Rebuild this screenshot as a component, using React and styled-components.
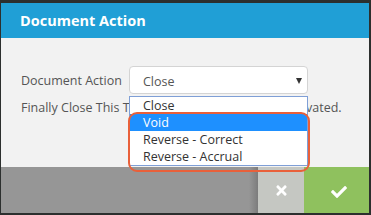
import React from 'react'
import styled, { createGlobalStyle } from 'styled-components'
import { FaTimes, FaCheck } from 'react-icons/fa'

const GlobalStyle = createGlobalStyle`
  html, body {
    margin: 0;
    padding: 0;
    background: #2c2f2e;
    font-family: "Open Sans", "Noto Sans", sans-serif;
  }
`

const Backdrop = styled.div`
  width: 371px;
  height: 215px;
  padding: 3px 2px 2px 1px;
  box-sizing: border-box;
  overflow: hidden;
`

const Modal = styled.div`
  position: relative;
  width: 368px;
  height: 210px;
  display: flex;
  flex-direction: column;
  background: #f2f2f2;
`

const Header = styled.div`
  height: 35px;
  flex: none;
  display: flex;
  align-items: center;
  padding: 0 19px;
  background: #209fd6;
  color: #fff;
  font-size: 14.5px;
  font-weight: 700;
`

const Body = styled.div`
  flex: 1;
  padding: 28px 20px 0;
  color: #555;
  font-size: 12.5px;
`

const Row = styled.div`
  display: flex;
  align-items: center;
`

const Label = styled.div`
  width: 108px;
  flex: none;
`

const SelectWrap = styled.div`
  position: relative;
  width: 179px;
`

const SelectBox = styled.div`
  height: 28px;
  box-sizing: border-box;
  display: flex;
  align-items: center;
  justify-content: space-between;
  padding: 2px 5px 0 13px;
  background: #fff;
  border: 1px solid #d4d4d4;
  border-radius: 4px;
  color: #555;
`

const Caret = styled.span`
  width: 0;
  height: 0;
  border-left: 3.5px solid transparent;
  border-right: 3.5px solid transparent;
  border-top: 6px solid #333;
`

const Hint = styled.p`
  margin: 5px 0 0;
  white-space: nowrap;
`

const OptionList = styled.ul`
  position: absolute;
  top: 30px;
  left: 0;
  right: 0;
  margin: 0;
  padding: 0;
  list-style: none;
  background: #fff;
  border: 1px solid #7f9fd6;
  z-index: 2;
`

const Option = styled.li`
  height: 17px;
  line-height: 17px;
  padding: 0 13px;
  color: ${p => (p.$active ? '#fff' : '#333')};
  background: ${p => (p.$active ? '#1e90ff' : 'transparent')};
`

const Callout = styled.div`
  position: absolute;
  top: 46px;
  left: -1px;
  width: 182px;
  height: 60px;
  box-sizing: border-box;
  border: 2px solid #e9603a;
  border-radius: 9px;
  z-index: 3;
`

const Footer = styled.div`
  height: 46px;
  flex: none;
  display: flex;
`

const Filler = styled.div`
  flex: 1;
  background: linear-gradient(to right, #969696 0, #969696 calc(100% - 9px), #7c7c7c 100%);
`

const ActionButton = styled.button`
  width: ${p => p.$width}px;
  border: 0;
  margin: 0;
  padding: 0;
  display: flex;
  align-items: center;
  justify-content: center;
  background: ${p => p.$bg};
  color: #fff;
  font-size: ${p => p.$size}px;
`

const options = ['Close', 'Void', 'Reverse - Correct', 'Reverse - Accrual']

export default function App() {
  return (
    <>
      <GlobalStyle />
      <Backdrop>
        <Modal>
          <Header>Document Action</Header>
          <Body>
            <Row>
              <Label>Document Action</Label>
              <SelectWrap>
                <SelectBox>
                  <span>Close</span>
                  <Caret />
                </SelectBox>
                <OptionList>
                  {options.map(o => (
                    <Option key={o} $active={o === 'Void'}>{o}</Option>
                  ))}
                </OptionList>
                <Callout />
              </SelectWrap>
            </Row>
            <Hint>Finally Close This Transaction. It can not be reactivated.</Hint>
          </Body>
          <Footer>
            <Filler />
            <ActionButton $width={46} $bg="#c5c7c2" $size={15}>
              <FaTimes />
            </ActionButton>
            <ActionButton $width={65} $bg="#8fc15e" $size={16}>
              <FaCheck style={{ marginLeft: 5, marginTop: 3 }} />
            </ActionButton>
          </Footer>
        </Modal>
      </Backdrop>
    </>
  )
}
